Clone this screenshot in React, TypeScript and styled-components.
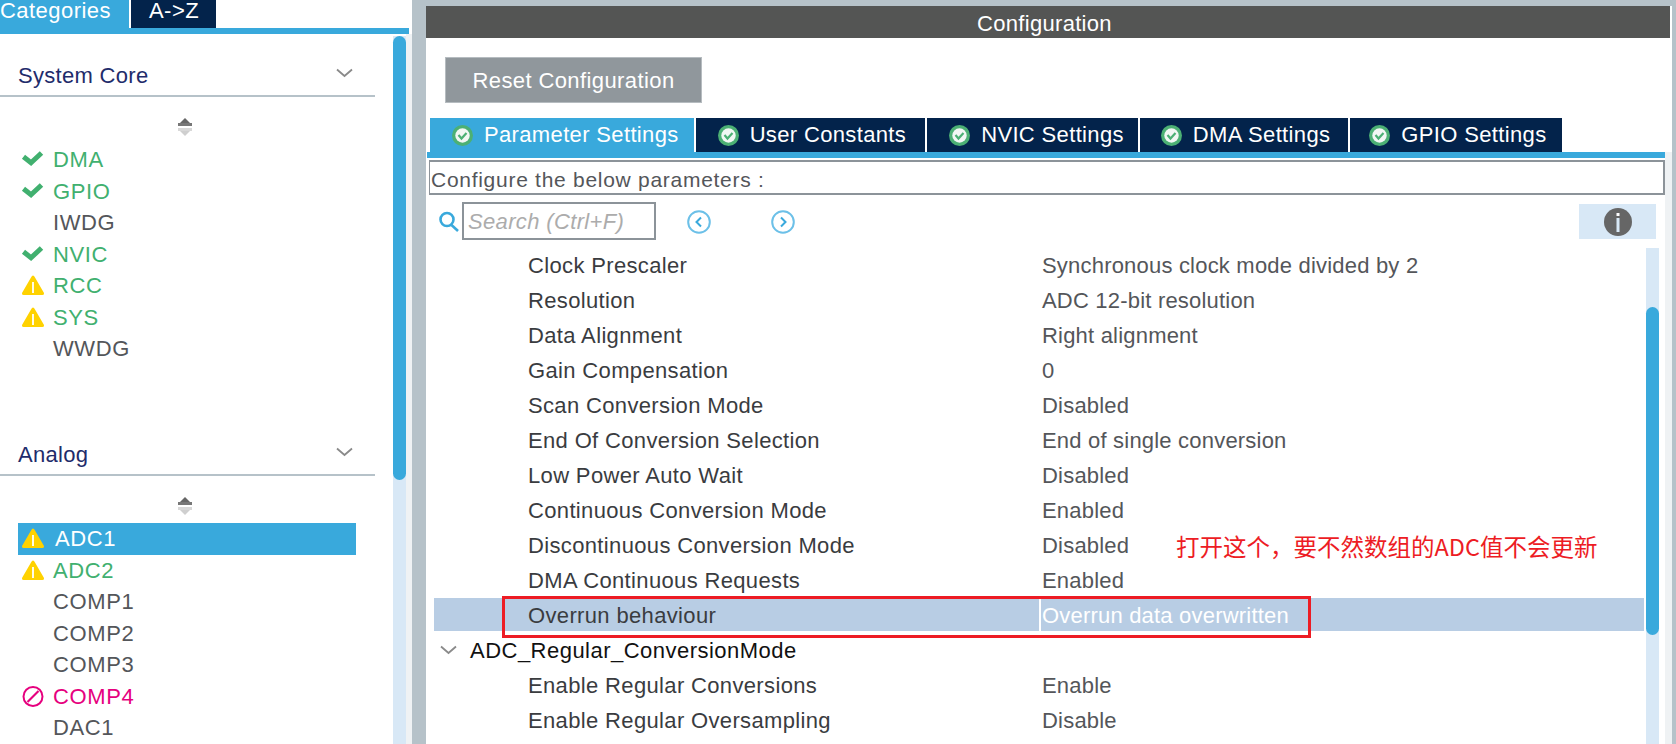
import * as React from 'react';
import styled, { createGlobalStyle } from 'styled-components';

const BLUE = '#39a9dc';
const NAVY = '#03234b';
const GREEN = '#41b06f';
const PINK = '#e6007e';
const GREY_TEXT = '#54565a';
const TRACK = '#d8e8f6';
const LINE = '#8c9399';

const GlobalStyle = createGlobalStyle`
  html, body {
    margin: 0;
    height: 744px;
    overflow: hidden;
    background: #b6c2c9;
  }
  body, #root {
    font-family: "Liberation Sans", Arial, sans-serif;
  }
`;

const Page = styled.div`
  display: flex;
  width: 1676px;
  height: 744px;
  overflow: hidden;
  background: #b6c2c9;
`;

/* left column */

const Sidebar = styled.aside`
  display: flex;
  flex-direction: column;
  width: 412px;
  height: 744px;
  margin-right: 14px;
  background: #fff;
  flex: none;
`;

const SideTabs = styled.div`
  display: flex;
  height: 28px;
  gap: 2px;
  flex: none;
`;

const SideTab = styled.div<{ $active?: boolean; $width: number; $pad: number }>`
  width: ${p => p.$width}px;
  padding-left: ${p => p.$pad}px;
  box-sizing: border-box;
  height: 28px;
  overflow: hidden;
  background: ${p => (p.$active ? BLUE : NAVY)};
  color: #fff;
  font-size: 22px;
  letter-spacing: 0.45px;
  line-height: 22px;
  white-space: nowrap;
`;

const SideRule = styled.div`
  width: 409px;
  height: 6px;
  background: ${BLUE};
  flex: none;
`;

const SideBody = styled.div`
  display: flex;
  flex: 1;
  min-height: 0;
`;

const SideList = styled.div`
  width: 375px;
  margin-right: 18px;
  flex: none;
`;

const Section = styled.section<{ $gap: number }>`
  height: ${p => p.$gap}px;
`;

const SectionHead = styled.div`
  display: flex;
  justify-content: space-between;
  align-items: flex-start;
  box-sizing: border-box;
  height: 63px;
  padding: 27px 22px 0 18px;
  border-bottom: 2px solid #b6c2c9;
  color: #1f2c6b;
  font-size: 22px;
  letter-spacing: 0.3px;
  line-height: 30px;
`;

const HeadChevron = styled.span`
  display: block;
  margin-top: 7px;
  height: 11px;
  line-height: 0;
`;

const Spinner = styled.div`
  display: flex;
  justify-content: center;
  align-items: center;
  height: 47px;
  padding: 13px 6px 0 0;
  box-sizing: border-box;
`;

const Item = styled.div<{ $tone: 'ok' | 'off' | 'bad' | 'sel' }>`
  display: flex;
  align-items: center;
  box-sizing: border-box;
  width: 338px;
  height: 31.5px;
  margin-left: 18px;
  padding: 1px 0 0 ${p => (p.$tone === 'sel' ? 37 : 35)}px;
  position: relative;
  font-size: 22px;
  letter-spacing: 0.6px;
  white-space: nowrap;
  background: ${p => (p.$tone === 'sel' ? BLUE : 'transparent')};
  color: ${p =>
    p.$tone === 'ok' ? GREEN : p.$tone === 'bad' ? PINK : p.$tone === 'sel' ? '#fff' : GREY_TEXT};
`;

const ItemIcon = styled.svg`
  position: absolute;
  left: 3px;
  top: 4px;
`;

const ScrollTrack = styled.div<{ $top: number; $width: number }>`
  width: ${p => p.$width}px;
  margin-top: ${p => p.$top}px;
  background: ${TRACK};
  flex: none;
`;

const ScrollThumb = styled.div<{ $start: number; $length: number }>`
  height: ${p => p.$length}px;
  margin-top: ${p => p.$start}px;
  background: ${BLUE};
  border-radius: 7px;
`;

const SideEdge = styled.div`
  flex: 1;
  background: #eff2f4;
`;

/* right column */

const Main = styled.main`
  display: flex;
  flex-direction: column;
  width: 1246px;
  height: 738px;
  margin-top: 6px;
  background: #fff;
  flex: none;
`;

const TitleBar = styled.header`
  height: 32px;
  padding-right: 7px;
  margin-right: 2px;
  background: #545554;
  color: #fff;
  font-size: 22px;
  letter-spacing: 0.3px;
  line-height: 35px;
  text-align: center;
  flex: none;
`;

const ResetButton = styled.button`
  display: block;
  box-sizing: border-box;
  width: 257px;
  height: 46px;
  margin: 19px 0 15px 19px;
  border: 1px solid #b6bcc0;
  padding: 1px 0 0;
  background: #90979c;
  color: #fff;
  font: 22px "Liberation Sans", Arial, sans-serif;
  letter-spacing: 0.4px;
  flex: none;
`;

const TabRow = styled.nav`
  display: flex;
  gap: 2px;
  height: 34px;
  padding-left: 4px;
  flex: none;
`;

const Tab = styled.div<{ $active?: boolean; $left: number; $right: number }>`
  display: flex;
  align-items: center;
  gap: 11px;
  padding: 0 ${p => p.$right}px 0 ${p => p.$left}px;
  background: ${p => (p.$active ? BLUE : NAVY)};
  color: #fff;
  font-size: 22px;
  letter-spacing: 0.35px;
  white-space: nowrap;
`;

const TabRule = styled.div`
  width: 1240px;
  margin-left: 1px;
  height: 6px;
  background: ${BLUE};
  flex: none;
`;

const Workspace = styled.div`
  display: flex;
  flex: 1;
  min-height: 0;
`;

const Panel = styled.div`
  display: flex;
  flex-direction: column;
  width: 1239px;
  flex: none;
  background: #fff;
`;

const PanelEdge = styled.div`
  flex: 1;
  margin-top: -6px;
  background: #eff2f4;
`;

const ConfigureBox = styled.div`
  box-sizing: border-box;
  height: 35px;
  margin: 2px 0 0 3px;
  padding: 4px 0 0 1px;
  border: 2px solid ${LINE};
  border-left-width: 1px;
  color: ${GREY_TEXT};
  font-size: 21px;
  letter-spacing: 0.72px;
  line-height: 28px;
  white-space: nowrap;
  flex: none;
`;

const SearchBar = styled.div`
  display: flex;
  align-items: center;
  height: 53px;
  padding: 0 9px 0 12px;
  box-sizing: border-box;
  flex: none;
`;

const SearchBox = styled.div`
  display: flex;
  align-items: center;
  box-sizing: border-box;
  width: 194px;
  height: 38px;
  margin: -2px 0 0 2px;
  padding: 2px 0 0 4px;
  border: 2px solid ${LINE};
  color: #acacac;
  font-size: 22px;
  font-style: italic;
  letter-spacing: 0.35px;
  white-space: nowrap;
`;

const NavButton = styled.svg<{ $gap: number }>`
  margin-left: ${p => p.$gap}px;
`;

const InfoCell = styled.div`
  display: flex;
  align-items: center;
  justify-content: center;
  width: 77px;
  height: 35px;
  margin-left: auto;
  background: ${TRACK};
`;

const TreeArea = styled.div`
  display: flex;
  flex: 1;
  min-height: 0;
  overflow: hidden;
`;

const Tree = styled.div`
  position: relative;
  width: 1210px;
  margin: 0 2px 0 8px;
  flex: none;
`;

const Row = styled.div`
  height: 35px;
`;

const RowInner = styled.div<{ $selected?: boolean }>`
  display: flex;
  align-items: center;
  box-sizing: border-box;
  height: 33px;
  background: ${p => (p.$selected ? '#b8cde4' : 'transparent')};
  font-size: 22px;
  white-space: nowrap;
`;

const RowLabel = styled.div`
  width: 610px;
  box-sizing: border-box;
  padding: 2px 0 0 94px;
  color: #3a3c3f;
  letter-spacing: 0.35px;
  flex: none;
`;

const RowValue = styled.div<{ $selected?: boolean }>`
  align-self: stretch;
  display: flex;
  align-items: center;
  margin-left: -5px;
  padding: 2px 0 0 1px;
  border-left: 2px solid ${p => (p.$selected ? '#fff' : 'transparent')};
  color: ${p => (p.$selected ? '#fff' : GREY_TEXT)};
  letter-spacing: 0.2px;
`;

const GroupLabel = styled.div`
  display: flex;
  align-items: center;
  gap: 13px;
  padding: 2px 0 0 6px;
  color: #111;
  letter-spacing: 0.48px;
`;

const Highlight = styled.div`
  position: absolute;
  left: 68px;
  top: 348px;
  width: 809px;
  height: 42px;
  box-sizing: border-box;
  border: 3px solid #ed1c24;
`;

const Note = styled.div`
  position: absolute;
  left: 742px;
  top: 281px;
  color: #ed1c24;
  font-family: "Noto Sans CJK SC", "Liberation Sans", sans-serif;
  font-size: 23.5px;
  line-height: 34px;
  white-space: nowrap;
`;

const CheckMark = () => (
  <ItemIcon width="24" height="22" viewBox="0 0 24 22">
    <path d="M2.5 8.8 L10 14.8 L20.5 5" fill="none" stroke={GREEN} strokeWidth="5" />
  </ItemIcon>
);

const WarningMark = () => (
  <ItemIcon width="24" height="22" viewBox="0 0 24 22">
    <path d="M12 1.5 Q13 1.5 14 3.5 L23 19 Q23.5 21 21.5 21 L2.5 21 Q0.5 21 1 19 L10 3.5 Q11 1.5 12 1.5 Z" fill="#ffd200" />
    <rect x="11" y="8" width="2" height="11" fill="#fff" opacity="0.9" />
  </ItemIcon>
);

const BlockedMark = () => (
  <ItemIcon width="24" height="24" viewBox="0 0 24 24">
    <circle cx="12" cy="11.5" r="9.5" fill="none" stroke={PINK} strokeWidth="2" />
    <path d="M6.5 17 L17.5 6" stroke={PINK} strokeWidth="2.2" />
  </ItemIcon>
);

const Chevron = ({ width = 17 }: { width?: number }) => (
  <svg width={width} height="11" viewBox="0 0 17 11">
    <path d="M1 1.5 L8.5 8 L16 1.5" fill="none" stroke="#8a8a8a" strokeWidth="1.8" />
  </svg>
);

const SpinnerIcon = () => (
  <svg width="16" height="19" viewBox="0 0 16 19">
    <path d="M8 0 L13 5 L3 5 Z" fill="#666" />
    <path d="M1 5 H15 V8 H1 Z" fill="#777" />
    <path d="M1 10 H15 V13 H1 Z" fill="#d8d8d8" />
    <path d="M3 13 H13 L8 18 Z" fill="#cfcfcf" />
  </svg>
);

const TabCheck = () => (
  <svg width="21" height="21" viewBox="0 0 21 21" style={{ flex: 'none' }}>
    <circle cx="10.5" cy="10.5" r="10.5" fill="#4cb074" />
    <circle cx="10.5" cy="10.5" r="7.2" fill="#f2f7f4" />
    <path d="M6.5 10 L9.5 13.5 L14.5 8" fill="none" stroke="#4cb074" strokeWidth="2.2" />
  </svg>
);

type Tone = 'ok' | 'off' | 'warn' | 'bad';

const Entry = ({ name, tone, selected }: { name: string; tone: Tone; selected?: boolean }) => (
  <Item $tone={selected ? 'sel' : tone === 'ok' || tone === 'warn' ? 'ok' : tone === 'bad' ? 'bad' : 'off'}>
    {tone === 'ok' && <CheckMark />}
    {tone === 'warn' && <WarningMark />}
    {tone === 'bad' && <BlockedMark />}
    {name}
  </Item>
);

const systemCore: [string, Tone][] = [
  ['DMA', 'ok'],
  ['GPIO', 'ok'],
  ['IWDG', 'off'],
  ['NVIC', 'ok'],
  ['RCC', 'warn'],
  ['SYS', 'warn'],
  ['WWDG', 'off'],
];

const analog: [string, Tone][] = [
  ['ADC1', 'warn'],
  ['ADC2', 'warn'],
  ['COMP1', 'off'],
  ['COMP2', 'off'],
  ['COMP3', 'off'],
  ['COMP4', 'bad'],
  ['DAC1', 'off'],
];

const tabs: [string, number, number][] = [
  ['Parameter Settings', 22, 15],
  ['User Constants', 22, 19],
  ['NVIC Settings', 22, 14],
  ['DMA Settings', 21, 18],
  ['GPIO Settings', 19, 15],
];

const params: [string, string][] = [
  ['Clock Prescaler', 'Synchronous clock mode divided by 2'],
  ['Resolution', 'ADC 12-bit resolution'],
  ['Data Alignment', 'Right alignment'],
  ['Gain Compensation', '0'],
  ['Scan Conversion Mode', 'Disabled'],
  ['End Of Conversion Selection', 'End of single conversion'],
  ['Low Power Auto Wait', 'Disabled'],
  ['Continuous Conversion Mode', 'Enabled'],
  ['Discontinuous Conversion Mode', 'Disabled'],
  ['DMA Continuous Requests', 'Enabled'],
  ['Overrun behaviour', 'Overrun data overwritten'],
];

const regular: [string, string][] = [
  ['Enable Regular Conversions', 'Enable'],
  ['Enable Regular Oversampling', 'Disable'],
];

const ParamRow = ({ label, value, selected }: { label: string; value: string; selected?: boolean }) => (
  <Row>
    <RowInner $selected={selected}>
      <RowLabel>{label}</RowLabel>
      <RowValue $selected={selected}>{value}</RowValue>
    </RowInner>
  </Row>
);

const App = () => (
  <Page>
    <GlobalStyle />
    <Sidebar>
      <SideTabs>
        <SideTab $active $width={129} $pad={0}>Categories</SideTab>
        <SideTab $width={85} $pad={18}>A-&gt;Z</SideTab>
      </SideTabs>
      <SideRule />
      <SideBody>
        <SideList>
          <Section $gap={379}>
            <SectionHead>
              System Core
              <HeadChevron><Chevron /></HeadChevron>
            </SectionHead>
            <Spinner><SpinnerIcon /></Spinner>
            {systemCore.map(([name, tone]) => (
              <Entry key={name} name={name} tone={tone} />
            ))}
          </Section>
          <Section $gap={331}>
            <SectionHead>
              Analog
              <HeadChevron><Chevron /></HeadChevron>
            </SectionHead>
            <Spinner><SpinnerIcon /></Spinner>
            {analog.map(([name, tone], i) => (
              <Entry key={name} name={name} tone={tone} selected={i === 0} />
            ))}
          </Section>
        </SideList>
        <ScrollTrack $top={2} $width={13}>
          <ScrollThumb $start={0} $length={444} />
        </ScrollTrack>
        <SideEdge />
      </SideBody>
    </Sidebar>
    <Main>
      <TitleBar>Configuration</TitleBar>
      <ResetButton>Reset Configuration</ResetButton>
      <TabRow>
        {tabs.map(([name, left, right], i) => (
          <Tab key={name} $active={i === 0} $left={left} $right={right}>
            <TabCheck />
            {name}
          </Tab>
        ))}
      </TabRow>
      <TabRule />
      <Workspace>
        <Panel>
          <ConfigureBox>Configure the below parameters :</ConfigureBox>
          <SearchBar>
            <svg width="22" height="24" viewBox="0 0 22 24" style={{ flex: 'none' }}>
              <circle cx="9" cy="9.5" r="6.5" fill="none" stroke={BLUE} strokeWidth="2.6" />
              <path d="M13.5 15 L20 21" stroke={BLUE} strokeWidth="2.6" />
            </svg>
            <SearchBox>Search (Ctrl+F)</SearchBox>
            <NavButton $gap={31} width="24" height="24" viewBox="0 0 24 24">
              <circle cx="12" cy="12" r="10.8" fill="none" stroke="#6cc0e8" strokeWidth="2" />
              <path d="M14 7.5 L9.5 12 L14 16.5" fill="none" stroke="#39a9dc" strokeWidth="2" />
            </NavButton>
            <NavButton $gap={60} width="24" height="24" viewBox="0 0 24 24">
              <circle cx="12" cy="12" r="10.8" fill="none" stroke="#6cc0e8" strokeWidth="2" />
              <path d="M10 7.5 L14.5 12 L10 16.5" fill="none" stroke="#39a9dc" strokeWidth="2" />
            </NavButton>
            <InfoCell>
              <svg width="28" height="28" viewBox="0 0 28 28">
                <circle cx="14" cy="14" r="14" fill="#666" />
                <rect x="12.5" y="5" width="3" height="3" fill="#fff" />
                <rect x="12.5" y="10" width="3" height="14" fill="#d8e8f6" />
              </svg>
            </InfoCell>
          </SearchBar>
          <TreeArea>
            <Tree>
              {params.map(([label, value], i) => (
                <ParamRow key={label} label={label} value={value} selected={i === 10} />
              ))}
              <Row>
                <RowInner>
                  <GroupLabel>
                    <Chevron />
                    ADC_Regular_ConversionMode
                  </GroupLabel>
                </RowInner>
              </Row>
              {regular.map(([label, value]) => (
                <ParamRow key={label} label={label} value={value} />
              ))}
              <Highlight />
              <Note>{'打开这个\uFF0C要不然数组的ADC值不会更新'}</Note>
            </Tree>
            <ScrollTrack $top={0} $width={13}>
              <ScrollThumb $start={59} $length={328} />
            </ScrollTrack>
          </TreeArea>
        </Panel>
        <PanelEdge />
      </Workspace>
    </Main>
  </Page>
);

export default App;
